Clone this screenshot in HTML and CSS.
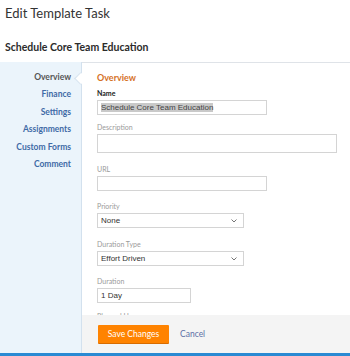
FILE: index.html
```html
<!DOCTYPE html>
<html lang="en">
<head>
    <meta charset="UTF-8">
    <title>Edit Template Task</title>
    <link rel="stylesheet" href="styles.css">
</head>
<body>

    <!-- Page header -->
    <h1 class="page-title">Edit Template Task</h1>
    <h2 class="task-name">Schedule Core Team Education</h2>

    <div class="editor">
        <!-- Side navigation -->
        <nav class="side-nav">
            <a class="active">Overview</a>
            <a>Finance</a>
            <a>Settings</a>
            <a>Assignments</a>
            <a>Custom Forms</a>
            <a>Comment</a>
        </nav>

        <!-- Form panel -->
        <div class="panel">
            <span class="notch"></span>
            <div class="form">
                <div class="section-title">Overview</div>

                <label class="field-label strong">Name</label>
                <div class="input w-md"><span class="selected">Schedule Core Team Education</span></div>

                <label class="field-label first">Description</label>
                <div class="input w-lg tall"></div>

                <label class="field-label">URL</label>
                <div class="input w-md"></div>

                <label class="field-label">Priority</label>
                <div class="input select w-sel">None
                    <svg class="chev" width="6" height="4" viewBox="0 0 6 4"><polyline points="0.5,0.5 3,3 5.5,0.5" fill="none" stroke="#666" stroke-width="0.9"/></svg>
                </div>

                <label class="field-label">Duration Type</label>
                <div class="input select w-sel">Effort Driven
                    <svg class="chev" width="6" height="4" viewBox="0 0 6 4"><polyline points="0.5,0.5 3,3 5.5,0.5" fill="none" stroke="#666" stroke-width="0.9"/></svg>
                </div>

                <label class="field-label">Duration</label>
                <div class="input w-sm">1 Day</div>

                <label class="field-label last">Planned Hours</label>
            </div>

            <div class="footer">
                <button class="save">Save Changes</button>
                <a class="cancel">Cancel</a>
            </div>
        </div>
    </div>

    <div class="bottom-bar"></div>

</body>
</html>
```

FILE: styles.css
```css
* {
    margin: 0;
    padding: 0;
    box-sizing: border-box;
}

body {
    font-family: 'Lato', 'Open Sans', sans-serif;
    background: #fff;
    color: #333;
    width: 350px;
    height: 356px;
    overflow: hidden;
    display: flex;
    flex-direction: column;
}

/* Header */
.page-title {
    font-size: 13px;
    font-weight: 400;
    color: #333;
    line-height: 16px;
    padding: 5px 0 0 5px;
    height: 40px;
}

.task-name {
    font-size: 10.5px;
    font-weight: 700;
    color: #2b2b2b;
    line-height: 14px;
    padding-left: 5px;
    height: 22px;
}

/* Editor area */
.editor {
    display: flex;
    height: 291px;
    flex-shrink: 0;
}

.side-nav {
    width: 82px;
    flex-shrink: 0;
    background: #ebf4fb;
    border-right: 1px solid #d3e1ee;
    display: flex;
    flex-direction: column;
    align-items: flex-end;
    padding: 9px 10px 0 0;
    gap: 5.4px;
}

.side-nav a {
    font-size: 8.5px;
    font-weight: 700;
    color: #3f6aa6;
    line-height: 12px;
}

.side-nav a.active {
    color: #555;
}

.panel {
    flex: 1;
    position: relative;
    display: flex;
    flex-direction: column;
    border-top: 1px solid #dfe3e8;
}

/* Little arrow pointing at the active nav item */
.notch {
    position: absolute;
    left: -1px;
    top: 11px;
    width: 9px;
    height: 9px;
    background: #fff;
    border-left: 1px solid #d3e1ee;
    border-bottom: 1px solid #d3e1ee;
    transform: translateX(-5px) rotate(45deg);
}

.form {
    flex: 1;
    padding: 9px 0 0 15px;
    overflow: hidden;
}

.section-title {
    font-size: 9px;
    font-weight: 700;
    color: #d5711f;
    line-height: 12px;
    margin-bottom: 4px;
}

.field-label {
    display: block;
    font-size: 7px;
    color: #9a9a9a;
    line-height: 10px;
    margin: 10.5px 0 2px;
}

.field-label.strong {
    color: #222;
    font-weight: 700;
    margin: 0 0 2px;
}

.field-label.first {
    margin-top: 7px;
}

.field-label.last {
    margin-top: 8px;
}

.input {
    height: 15px;
    border: 1px solid #d4d4d4;
    background: #fff;
    font-family: 'Liberation Sans', Arial, sans-serif;
    font-size: 8px;
    color: #333;
    line-height: 13px;
    padding: 0 3px;
    position: relative;
}

.input .selected {
    background: #c9c9c9;
    color: #444;
}

.w-md { width: 170px; }
.w-lg { width: 240px; }
.w-sel { width: 147px; }
.w-sm { width: 94px; }
.tall { height: 19px; }

.select .chev {
    position: absolute;
    right: 6px;
    top: 5px;
}

/* Footer */
.footer {
    height: 38px;
    flex-shrink: 0;
    background: #f4f4f4;
    display: flex;
    align-items: center;
    gap: 11px;
    padding: 0 0 0 16px;
}

.save {
    background: #ff8300;
    color: #fff;
    border: none;
    border-radius: 1px;
    font-family: 'Lato', 'Open Sans', sans-serif;
    font-size: 8.5px;
    white-space: nowrap;
    padding: 0;
    width: 71px;
    height: 18px;
    box-shadow: 0 1px 0 #d86c00;
}

.cancel {
    font-size: 8.5px;
    color: #5c6fa6;
}

.bottom-bar {
    height: 3px;
    flex-shrink: 0;
    background: #2a8ad3;
}
```
